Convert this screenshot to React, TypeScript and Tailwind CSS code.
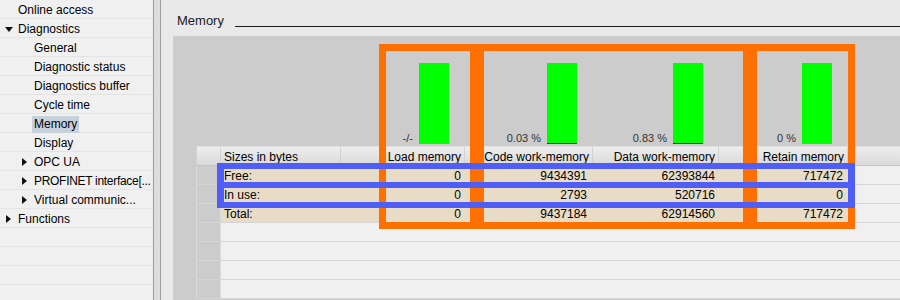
import React from 'react';

type NavItem = { label: string; indent: number; arrow?: 'down' | 'right'; selected?: boolean; tight?: boolean };

const navItems: NavItem[] = [
  { label: 'Online access', indent: 1 },
  { label: 'Diagnostics', indent: 1, arrow: 'down' },
  { label: 'General', indent: 2 },
  { label: 'Diagnostic status', indent: 2 },
  { label: 'Diagnostics buffer', indent: 2 },
  { label: 'Cycle time', indent: 2 },
  { label: 'Memory', indent: 2, selected: true },
  { label: 'Display', indent: 2 },
  { label: 'OPC UA', indent: 2, arrow: 'right' },
  { label: 'PROFINET interface[...', indent: 2, arrow: 'right', tight: true },
  { label: 'Virtual communic...', indent: 2, arrow: 'right' },
  { label: 'Functions', indent: 1, arrow: 'right' },
  { label: '', indent: 1 },
  { label: '', indent: 1 },
  { label: '', indent: 1 },
  { label: '', indent: 1 },
];

const rows = [
  { label: 'Free:', load: '0', code: '9434391', data: '62393844', retain: '717472' },
  { label: 'In use:', load: '0', code: '2793', data: '520716', retain: '0' },
  { label: 'Total:', load: '0', code: '9437184', data: '62914560', retain: '717472' },
];

function Arrow({ dir }: { dir: 'down' | 'right' }) {
  return dir === 'down' ? (
    <svg width="8" height="5" viewBox="0 0 8 5" className="mr-[5px]">
      <polygon points="0,0 8,0 4,5" fill="#111" />
    </svg>
  ) : (
    <svg width="5" height="8" viewBox="0 0 5 8" className="mr-[7px] ml-[1px]">
      <polygon points="0,0 5,4 0,8" fill="#111" />
    </svg>
  );
}

function Bar({ label, used }: { label: string; used?: boolean }) {
  return (
    <div className="flex h-full items-end justify-end pb-[2px] pr-[16px]">
      <span className="mr-[6px] text-[11px] leading-[12px] text-[#333]">{label}</span>
      <div className={`h-[81px] w-[30px] bg-[#00ff00] ${used ? 'border-b border-[#1010ff]' : ''}`} />
    </div>
  );
}

function HeadCell({ w, children }: { w: string; children?: React.ReactNode }) {
  return (
    <div className={`${w} flex h-full shrink-0 items-center justify-end border-r border-[#d2d2d2] pr-[3px] pt-[1px]`}>
      {children}
    </div>
  );
}

export default function App() {
  return (
    <div className="flex h-[300px] w-[900px] overflow-hidden font-['Liberation_Sans',Arial,sans-serif] text-[12px] text-black">
      {/* project tree */}
      <aside className="w-[153px] shrink-0 overflow-hidden bg-[#f0f0f0]">
        {navItems.map((item, i) => (
          <div key={i} className="flex h-[19px] items-center border-b border-[#e4e4e4] pt-[2px] leading-[17px]">
            <div className={`flex items-center ${item.indent === 1 ? 'pl-[5px]' : 'pl-[21px]'}`}>
              {item.arrow ? <Arrow dir={item.arrow} /> : <span className="w-[13px]" />}
              {item.label && (
                <span
                  className={`-ml-[2px] whitespace-nowrap px-[2px] ${item.selected ? 'bg-[#c6d1dc]' : ''} ${item.tight ? 'tracking-[-0.3px]' : ''}`}
                >
                  {item.label}
                </span>
              )}
            </div>
          </div>
        ))}
      </aside>

      {/* splitter */}
      <div className="w-[8px] shrink-0 border-x border-[#9c9c9c] bg-[#dddddd]" />

      <main className="flex min-w-0 flex-1 flex-col bg-[#e9e9e9] pl-[12px]">
        <div className="flex h-[36px] shrink-0 items-start pl-[4px] pt-[13px]">
          <span className="text-[13px] leading-[15px] text-[#1a1a1a]">Memory</span>
          <div className="ml-[11px] mt-[13px] h-px flex-1 bg-[#1a1a1a]" />
        </div>

        <div className="relative flex flex-1 flex-col bg-[#cccccc] pl-[23px]">
          {/* bar charts */}
          <div className="flex h-[110px] shrink-0">
            <div className="w-[184px] shrink-0" />
            <div className="w-[85px] shrink-0"><Bar label="-/-" /></div>
            <div className="w-[19px] shrink-0" />
            <div className="w-[109px] shrink-0"><Bar label="0.03 %" used /></div>
            <div className="w-[126px] shrink-0"><Bar label="0.83 %" used /></div>
            <div className="w-[38px] shrink-0" />
            <div className="w-[91px] shrink-0"><Bar label="0 %" /></div>
          </div>

          {/* table */}
          <div className="flex flex-1 flex-col border-t border-[#e2e2e2]">
            <div className="flex h-[19px] shrink-0 border-b border-[#c4c4c4] bg-gradient-to-b from-[#eeeeee] to-[#dadada]">
              <div className="w-[25px] shrink-0 border-x border-[#d2d2d2]" />
              <div className="flex w-[120px] shrink-0 items-center border-r border-[#d2d2d2] pl-[3px] pt-[1px]">Sizes in bytes</div>
              <HeadCell w="w-[39px]" />
              <HeadCell w="w-[85px]">Load memory</HeadCell>
              <HeadCell w="w-[19px]" />
              <HeadCell w="w-[109px]">Code work-memory</HeadCell>
              <HeadCell w="w-[126px]">Data work-memory</HeadCell>
              <HeadCell w="w-[38px]" />
              <HeadCell w="w-[91px]">Retain memory</HeadCell>
              <div className="flex-1" />
            </div>

            {rows.map((r) => (
              <div key={r.label} className="flex h-[19px] shrink-0 border-b border-[#d6d6d6] bg-[#f0f0f0]">
                <div className="w-[25px] shrink-0 border-x border-[#dadada] bg-[#cccccc]" />
                <div className="flex w-[627px] shrink-0 items-center bg-[#e8dcc7] pt-[1px]">
                  <div className="w-[159px] shrink-0 pl-[3px]">{r.label}</div>
                  <div className="w-[85px] shrink-0 pr-[4px] text-right">{r.load}</div>
                  <div className="w-[19px] shrink-0" />
                  <div className="w-[109px] shrink-0 pr-[6px] text-right">{r.code}</div>
                  <div className="w-[126px] shrink-0 pr-[4px] text-right">{r.data}</div>
                  <div className="w-[38px] shrink-0" />
                  <div className="w-[91px] shrink-0 pr-[5px] text-right">{r.retain}</div>
                </div>
                <div className="flex-1" />
              </div>
            ))}

            {[0, 1, 2, 3].map((i) => (
              <div key={i} className="flex h-[19px] shrink-0 border-b border-[#d6d6d6] bg-[#f0f0f0]">
                <div className="w-[25px] shrink-0 border-x border-[#dadada] bg-[#cccccc]" />
                <div className="flex-1" />
              </div>
            ))}
          </div>

          {/* highlight overlays */}
          <div className="pointer-events-none absolute left-[206px] top-[8px] h-[185px] w-[98px] border-[7px] border-[#ff7000]" />
          <div className="pointer-events-none absolute left-[304px] top-[8px] h-[185px] w-[273px] border-[7px] border-[#ff7000]" />
          <div className="pointer-events-none absolute left-[577px] top-[8px] h-[185px] w-[105px] border-[7px] border-[#ff7000]" />
          <div className="pointer-events-none absolute left-[44px] top-[127px] h-[25px] w-[638px] border-x-[7px] border-y-[6px] border-[#4f5ef7]" />
          <div className="pointer-events-none absolute left-[44px] top-[146px] h-[26px] w-[638px] border-x-[7px] border-y-[6px] border-[#4f5ef7]" />
        </div>
      </main>
    </div>
  );
}
